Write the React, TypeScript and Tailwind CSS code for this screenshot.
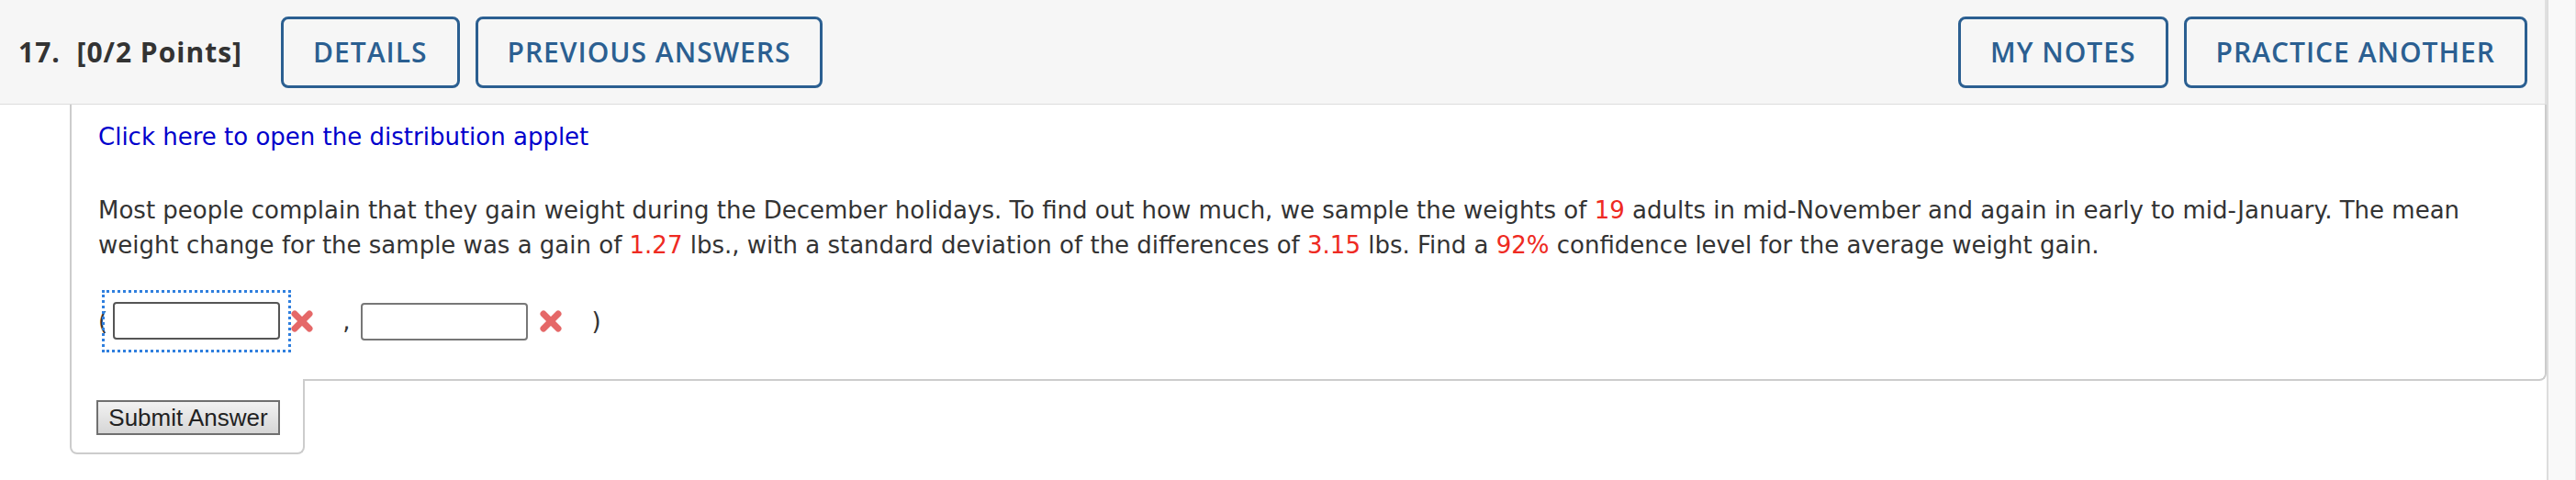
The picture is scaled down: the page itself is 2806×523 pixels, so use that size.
function RedX() {
  return (
    <svg width="28" height="26" viewBox="0 0 28 26" className="shrink-0">
      <g stroke="#e35c5c" strokeWidth="7" strokeLinecap="round" opacity="0.92">
        <line x1="6" y1="5" x2="22" y2="21" />
        <line x1="22" y1="5" x2="6" y2="21" />
      </g>
    </svg>
  );
}

function HeaderButton({ label }: { label: string }) {
  return (
    <button className="h-[78px] px-[32px] border-[3px] border-[#2b5f91] rounded-[8px] text-[#2b5f91] text-[30px] font-semibold tracking-[1px] bg-[#f6f6f6]">
      {label}
    </button>
  );
}

export default function App() {
  const red = "text-[#ee2a22]";
  return (
    <div className="h-screen flex bg-white">
      <div className="flex-1 min-w-0 flex flex-col">
        <header
          className="h-[114px] flex items-center justify-between pl-[20px] pr-[19px] bg-[#f6f6f6] border-b border-[#dcdcdc] border-r-2 border-r-[#e0e0e0]"
          style={{ fontFamily: '"Open Sans", sans-serif' }}
        >
          <div className="flex items-center">
            <span className="text-[30px] font-bold tracking-[1px] text-[#333] whitespace-pre mr-[42px]">17.  [0/2 Points]</span>
            <div className="flex gap-[17px]">
              <HeaderButton label="DETAILS" />
              <HeaderButton label="PREVIOUS ANSWERS" />
            </div>
          </div>
          <div className="flex gap-[17px]">
            <HeaderButton label="MY NOTES" />
            <HeaderButton label="PRACTICE ANOTHER" />
          </div>
        </header>

        <div className="ml-[76px] flex flex-col" style={{ fontFamily: '"DejaVu Sans", Verdana, sans-serif' }}>
          <div className="border-l-2 border-r-2 border-b-2 border-[#cccccc] rounded-br-[8px] pl-[29px] pt-[16px] pb-[29px] text-[26px] leading-[38px] text-[#333]">
            <div>
              <a className="text-[#0000cc]">Click here to open the distribution applet</a>
            </div>
            <p className="mt-[42px] whitespace-nowrap">
              Most people complain that they gain weight during the December holidays. To find out how much, we sample the weights of{" "}
              <span className={red}>19</span> adults in mid-November and again in early to mid-January. The mean
              <br />
              weight change for the sample was a gain of <span className={red}>1.27</span> lbs., with a standard deviation of the differences of{" "}
              <span className={red}>3.15</span> lbs. Find a <span className={red}>92%</span> confidence level for the average weight gain.
            </p>
            <div className="mt-[30px] flex items-center">
              <span className="-mr-[6px]">(</span>
              <div className="px-[9px] pt-[10px] pb-[11px] border-[3px] border-dotted border-[#2f7fde]">
                <input className="block w-[182px] h-[41px] border-2 border-[#555] rounded-[4px] bg-white" />
              </div>
              <div className="-ml-[2px]">
                <RedX />
              </div>
              <span className="ml-[30px] mr-[12px]">,</span>
              <input className="block w-[182px] h-[41px] border-2 border-[#777] rounded-[4px] bg-white" />
              <div className="ml-[11px]">
                <RedX />
              </div>
              <span className="ml-[30px]">)</span>
            </div>
          </div>
          <div className="relative z-10 -mt-[2px] w-[256px] h-[82px] bg-white border-l-2 border-r-2 border-b-2 border-[#cccccc] rounded-b-[8px] pl-[27px] pt-[23px]">
            <button
              className="w-[200px] h-[38px] border-2 border-[#707070] bg-gradient-to-b from-[#f2f2f2] to-[#d6d6d6] text-[26px] leading-none text-[#222]"
              style={{ fontFamily: '"Liberation Sans", Arial, sans-serif' }}
            >
              Submit Answer
            </button>
          </div>
        </div>
      </div>
      <div className="w-[32px] border-l-2 border-[#dddddd] bg-[#f9f9f9] border-r border-r-[#e6e6e6]" />
    </div>
  );
}
